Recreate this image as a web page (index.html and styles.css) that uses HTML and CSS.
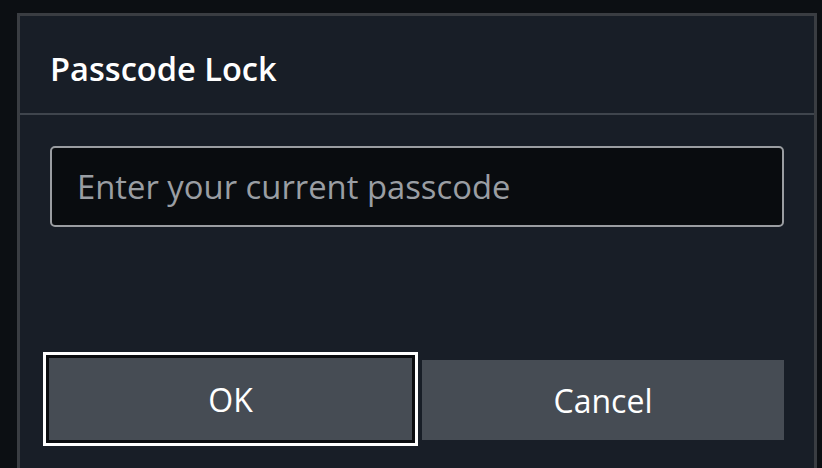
FILE: index.html
```html
<!DOCTYPE html>
<html lang="en">
<head>
<meta charset="utf-8">
<title>Passcode Lock</title>
<link rel="stylesheet" href="styles.css">
</head>
<body>
<div class="dialog">
  <div class="dialog-header">
    <h1 class="dialog-title">Passcode Lock</h1>
  </div>
  <div class="dialog-body">
    <input class="passcode-input" type="password" placeholder="Enter your current passcode">
    <div class="dialog-actions">
      <button class="btn btn-primary" type="button">OK</button>
      <button class="btn" type="button">Cancel</button>
    </div>
  </div>
</div>
</body>
</html>
```

FILE: styles.css
```css
* {
  box-sizing: border-box;
}

html, body {
  margin: 0;
  padding: 0;
  height: 100%;
  overflow: hidden;
}

body {
  background: #0c0f13;
  font-family: "Open Sans", "Noto Sans", "DejaVu Sans", sans-serif;
  color: #ffffff;
  padding: 13px 5px 0 17px;
}

.dialog {
  width: 800px;
  height: 455px;
  background: #181e27;
  border: 3px solid #3a3d42;
  border-bottom: none;
  display: flex;
  flex-direction: column;
}

.dialog-header {
  height: 99px;
  padding: 33px 30px 0 30px;
  border-bottom: 2px solid #3f454d;
}

.dialog-title {
  margin: 0;
  font-size: 32.6px;
  line-height: 40px;
  font-weight: 600;
  color: #ffffff;
}

.dialog-body {
  padding: 31px 30px 0 30px;
  display: flex;
  flex-direction: column;
}

.passcode-input {
  width: 100%;
  height: 81px;
  background: #090c0f;
  border: 2px solid #9a9da1;
  border-radius: 5px;
  padding: 0 0 0 25px;
  font-family: inherit;
  font-size: 32.8px;
  color: #ffffff;
  outline: none;
}

.passcode-input::placeholder {
  color: #9a9ea3;
  opacity: 1;
}

.dialog-actions {
  margin-top: 131px;
  display: grid;
  grid-template-columns: 1fr 1fr;
  column-gap: 10px;
  align-items: end;
}

.btn {
  height: 80px;
  background: #464c54;
  border: none;
  border-radius: 0;
  color: #ffffff;
  font-family: inherit;
  font-size: 32px;
  padding: 0;
}

.btn-primary {
  height: 82px;
  width: calc(100% + 1px);
  margin-left: -1px;
  box-shadow: 0 0 0 3px #0b0d10, 0 0 0 6px #ffffff;
}
```
